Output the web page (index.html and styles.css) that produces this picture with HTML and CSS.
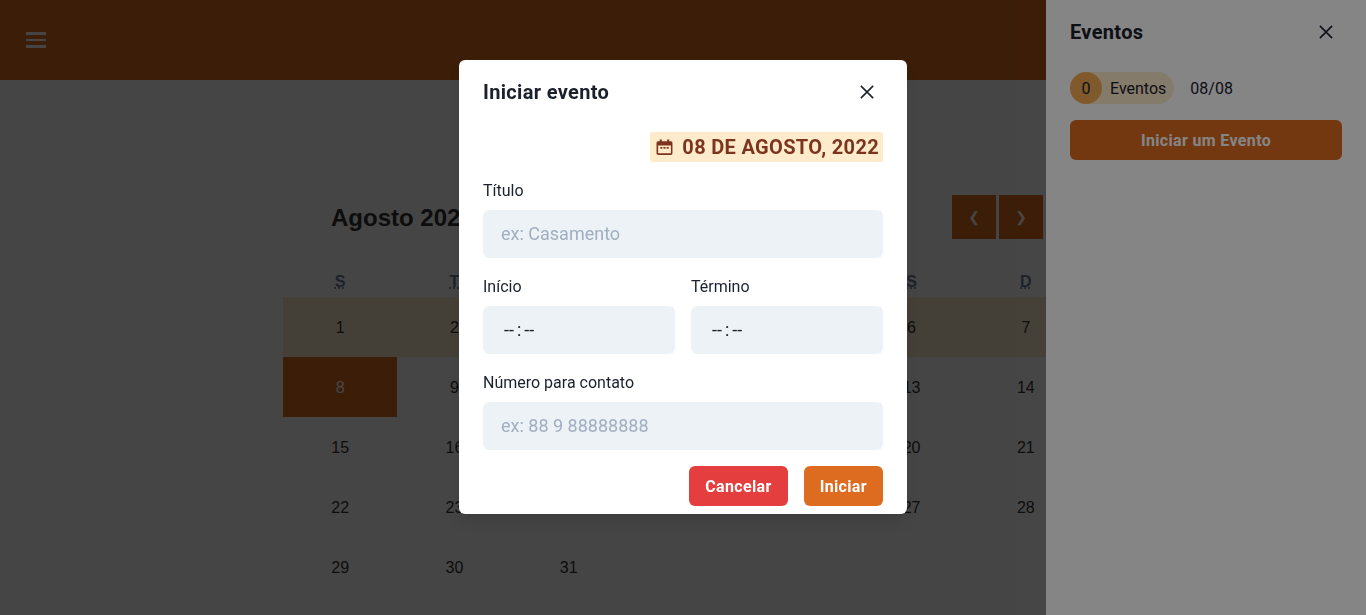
FILE: index.html
```html
<!DOCTYPE html>
<html lang="pt-BR">

<head>
    <meta charset="UTF-8">
    <meta name="viewport" content="width=device-width, initial-scale=1.0">
    <title>Agenda de eventos</title>
    <link rel="stylesheet" href="styles.css">
</head>

<body>
<header class="topbar">
    <button class="menu-btn" type="button" aria-label="Menu">
        <span></span>
        <span></span>
        <span></span>
    </button>
</header>

<main class="calendar">
    <div class="cal-head">
        <h2 class="cal-title">Agosto 2022</h2>
        <div class="cal-nav">
            <button type="button">&#10094;</button>
            <button type="button">&#10095;</button>
        </div>
    </div>
    <table class="cal-table">
        <thead>
            <tr>
                <th><abbr>S</abbr></th>
                <th><abbr>T</abbr></th>
                <th><abbr>Q</abbr></th>
                <th><abbr>Q</abbr></th>
                <th><abbr>S</abbr></th>
                <th><abbr>S</abbr></th>
                <th><abbr>D</abbr></th>
            </tr>
        </thead>
        <tbody>
            <tr class="week-current">
                <td>1</td><td>2</td><td>3</td><td>4</td><td>5</td><td>6</td><td>7</td>
            </tr>
            <tr>
                <td class="day-selected">8</td><td>9</td><td>10</td><td>11</td><td>12</td><td>13</td><td>14</td>
            </tr>
            <tr>
                <td>15</td><td>16</td><td>17</td><td>18</td><td>19</td><td>20</td><td>21</td>
            </tr>
            <tr>
                <td>22</td><td>23</td><td>24</td><td>25</td><td>26</td><td>27</td><td>28</td>
            </tr>
            <tr>
                <td>29</td><td>30</td><td>31</td><td></td><td></td><td></td><td></td>
            </tr>
        </tbody>
    </table>
</main>

<div class="overlay"></div>

<aside class="drawer">
    <div class="drawer-head">
        <h2 class="drawer-title">Eventos</h2>
        <button class="close-btn" type="button" aria-label="Fechar">
            <svg viewBox="0 0 24 24" width="14" height="14"><path d="M1.5 1.5 22.5 22.5M22.5 1.5 1.5 22.5" fill="none" stroke="currentColor" stroke-width="2.6"/></svg>
        </button>
    </div>
    <div class="drawer-info">
        <span class="tag"><span class="tag-count">0</span><span class="tag-label">Eventos</span></span>
        <span class="drawer-date">08/08</span>
    </div>
    <button class="drawer-start" type="button">Iniciar um Evento</button>
</aside>

<div class="overlay"></div>

<section class="modal">
    <div class="modal-head">
        <h2 class="modal-title">Iniciar evento</h2>
        <button class="close-btn" type="button" aria-label="Fechar">
            <svg viewBox="0 0 24 24" width="14" height="14"><path d="M1.5 1.5 22.5 22.5M22.5 1.5 1.5 22.5" fill="none" stroke="currentColor" stroke-width="2.6"/></svg>
        </button>
    </div>
    <form class="modal-body">
        <div class="date-row">
            <span class="date-badge">
                <svg viewBox="0 0 16 16" width="17" height="17">
                    <path d="M3.5 0.5h2v1.5h5V0.5h2V2H14a1.5 1.5 0 0 1 1.5 1.5v10A1.5 1.5 0 0 1 14 15H2a1.5 1.5 0 0 1-1.5-1.5v-10A1.5 1.5 0 0 1 2 2h1.5zM2 6v7.5h12V6z" fill="currentColor"/>
                    <rect x="4" y="7.5" width="2" height="1.6" fill="currentColor"/>
                    <rect x="7" y="7.5" width="2" height="1.6" fill="currentColor"/>
                    <rect x="10" y="7.5" width="2" height="1.6" fill="currentColor"/>
                </svg>
                08 DE AGOSTO, 2022
            </span>
        </div>
        <div class="field">
            <label for="titulo">Título</label>
            <input id="titulo" type="text" placeholder="ex: Casamento">
        </div>
        <div class="field-row">
            <div class="field">
                <label for="inicio">Início</label>
                <input class="time" id="inicio" type="text" value="-- : --">
            </div>
            <div class="field">
                <label for="termino">Término</label>
                <input class="time" id="termino" type="text" value="-- : --">
            </div>
        </div>
        <div class="field">
            <label for="contato">Número para contato</label>
            <input id="contato" type="text" placeholder="ex: 88 9 88888888">
        </div>
        <div class="modal-actions">
            <button class="btn btn-cancel" type="button">Cancelar</button>
            <button class="btn btn-start" type="button">Iniciar</button>
        </div>
    </form>
</section>
</body>

</html>
```

FILE: styles.css
```css
* {
    margin: 0;
    padding: 0;
    box-sizing: border-box;
}

html, body {
    height: 100%;
    overflow: hidden;
}

body {
    background-color: #fff;
    color: #1a202c;
    font-family: Roboto, "Liberation Sans", sans-serif;
    font-size: 16px;
    line-height: 24px;
}

button {
    border: none;
    background: none;
    font: inherit;
    color: inherit;
    cursor: pointer;
}

/* barra superior */
.topbar {
    height: 80px;
    background-color: #dd6b20;
    display: flex;
    align-items: center;
    padding-left: 26px;
}

.menu-btn {
    width: 20px;
    display: flex;
    flex-direction: column;
    gap: 4px;
}

.menu-btn span {
    height: 2.5px;
    background-color: #fff;
}

/* calendario */
.calendar {
    width: 800px;
    margin: 115px auto 0;
    font-family: "Liberation Sans", Arial, sans-serif;
}

.cal-head {
    display: flex;
    justify-content: space-between;
    align-items: center;
    height: 44px;
    padding: 0 40px 0 48px;
}

.cal-title {
    padding-top: 2px;
    font-size: 24px;
    font-weight: 700;
    color: #333;
}

.cal-nav {
    display: flex;
    gap: 3px;
}

.cal-nav button {
    width: 44px;
    height: 44px;
    background-color: #dd6b20;
    color: #fff;
    font-family: "DejaVu Sans", sans-serif;
    font-size: 14px;
}

.cal-table {
    width: 100%;
    margin-top: 30px;
    border-collapse: collapse;
    table-layout: fixed;
}

.cal-table th {
    height: 28px;
    padding-bottom: 3px;
    font-size: 16px;
    font-weight: 700;
    color: #718096;
}

.cal-table abbr {
    text-decoration: underline dotted;
}

.cal-table td {
    height: 60px;
    padding-top: 1px;
    text-align: center;
    color: #333;
}

.week-current {
    background-color: #feebcb;
}

.cal-table .day-selected {
    background-color: #dd6b20;
    color: #fff;
}

/* fundo escuro do drawer e do modal */
.overlay {
    position: fixed;
    top: 0;
    left: 0;
    width: 100%;
    height: 100%;
    background-color: rgba(0, 0, 0, 0.48);
}

/* drawer de eventos */
.drawer {
    position: fixed;
    top: 0;
    right: 0;
    bottom: 0;
    width: 320px;
    background-color: #fff;
    padding: 16px 24px;
}

.drawer-head {
    display: flex;
    justify-content: space-between;
    align-items: center;
    height: 32px;
}

.drawer-title,
.modal-title {
    font-size: 20px;
    font-weight: 700;
    letter-spacing: 0.33px;
}

.close-btn {
    width: 32px;
    height: 32px;
    display: flex;
    align-items: center;
    justify-content: center;
}

.drawer-info {
    display: flex;
    align-items: center;
    gap: 16px;
    margin-top: 24px;
    padding-top: 1px;
    height: 32px;
}

.tag {
    display: flex;
    align-items: center;
    height: 32px;
    margin-top: -1px;
    border-radius: 16px;
    background-color: #feebcb;
    padding-right: 8px;
}

.tag-count,
.tag-label {
    padding-top: 1px;
}

.tag-count {
    width: 32px;
    height: 32px;
    line-height: 32px;
    text-align: center;
    border-radius: 50%;
    background-color: #f6ad55;
    margin-right: 8px;
}

.drawer-start {
    width: 100%;
    height: 40px;
    margin-top: 16px;
    padding-top: 1px;
    border-radius: 6px;
    background-color: #dd6b20;
    color: #fff;
    font-weight: 700;
    letter-spacing: 0.35px;
}

/* modal */
.modal {
    position: fixed;
    top: 60px;
    left: 459px;
    width: 448px;
    background-color: #fff;
    border-radius: 6px;
    box-shadow: 0 10px 15px -3px rgba(0, 0, 0, 0.1), 0 4px 6px -2px rgba(0, 0, 0, 0.05);
}

.modal-head {
    display: flex;
    justify-content: space-between;
    align-items: center;
    height: 64px;
    padding: 16px 24px;
}

.modal-body {
    display: flex;
    flex-direction: column;
    gap: 16px;
    padding: 8px 24px;
}

.date-row {
    display: flex;
    justify-content: flex-end;
}

.date-badge {
    display: flex;
    align-items: center;
    gap: 9px;
    height: 30px;
    padding: 0 4px 0 6px;
    border-radius: 2px;
    background-color: #feebcb;
    color: #7b341e;
    font-size: 20px;
    font-weight: 700;
    letter-spacing: 0.33px;
}

.field {
    display: flex;
    flex-direction: column;
    gap: 8px;
    flex: 1;
}

.field label {
    height: 24px;
    padding-top: 1px;
    font-size: 16px;
}

.field input {
    width: 100%;
    height: 48px;
    padding: 0 16px 2px;
    border: 2px solid transparent;
    border-radius: 6px;
    outline: none;
    background-color: #edf2f7;
    color: #1a202c;
    font: inherit;
    font-size: 18px;
}

.field input::placeholder {
    color: #a0aec0;
}

.field input.time {
    padding-left: 19px;
    word-spacing: -1.5px;
}

.field-row {
    display: flex;
    gap: 16px;
}

.modal-actions {
    display: flex;
    justify-content: flex-end;
    gap: 16px;
}

.btn {
    height: 40px;
    padding: 1px 16px 0;
    border-radius: 6px;
    color: #fff;
    font-weight: 700;
    letter-spacing: 0.35px;
}

.btn-cancel {
    background-color: #e53e3e;
}

.btn-start {
    background-color: #dd6b20;
}
```
